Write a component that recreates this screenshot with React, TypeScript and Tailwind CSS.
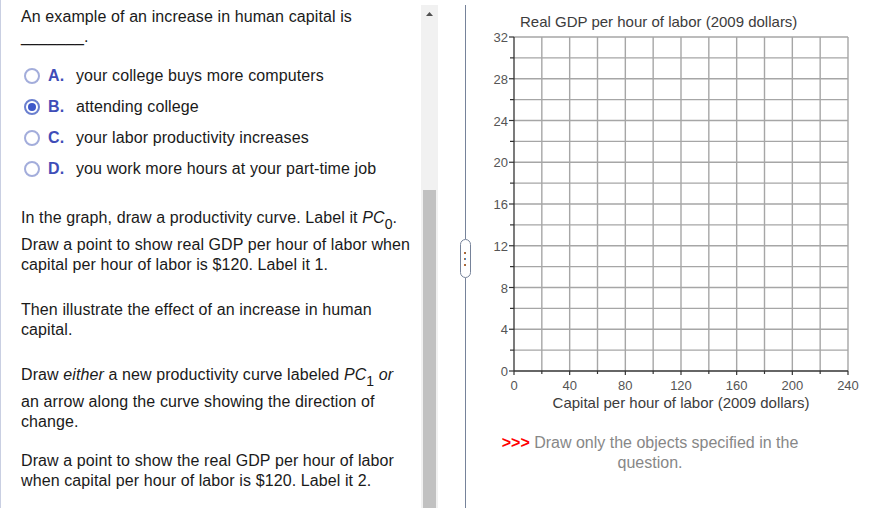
import React from "react";

const X0 = 22;
const X1 = 356;
const Y0 = 371;
const Y1 = 37;
const DX = (X1 - X0) / 12;
const DY = (Y0 - Y1) / 16;

const options = [
  { letter: "A.", text: "your college buys more computers", checked: false },
  { letter: "B.", text: "attending college", checked: true },
  { letter: "C.", text: "your labor productivity increases", checked: false },
  { letter: "D.", text: "you work more hours at your part-time job", checked: false },
];

const Radio = ({ checked }: { checked: boolean }) => (
  <span
    className={
      checked
        ? "ml-[3px] flex h-[16px] w-[16px] shrink-0 items-center justify-center rounded-full border-2 border-[#6a7fcf] bg-white"
        : "ml-[3px] flex h-[16px] w-[16px] shrink-0 items-center justify-center rounded-full border-2 border-[#a3addb] bg-white"
    }
  >
    {checked && <span className="h-[8px] w-[8px] rounded-full bg-[#3d57c9]" />}
  </span>
);

const Graph = () => {
  const vLines = Array.from({ length: 12 }, (_, i) => X0 + (i + 1) * DX);
  const hLines = Array.from({ length: 16 }, (_, j) => Y0 - (j + 1) * DY);
  const yTicks = Array.from({ length: 17 }, (_, j) => j);
  const xTicks = Array.from({ length: 13 }, (_, i) => i);

  return (
    <svg width="380" height="433" className="block" fontFamily="'Liberation Sans', Arial, sans-serif">
      <text x="28" y="27" fontSize="15" fill="#3c3c3c">
        Real GDP per hour of labor (2009 dollars)
      </text>

      {/* grid */}
      {vLines.map((x) => (
        <line key={"v" + x} x1={x} x2={x} y1={Y1} y2={Y0} stroke="#a6a6a6" strokeWidth="1.4" />
      ))}
      {hLines.map((y) => (
        <line key={"h" + y} x1={X0} x2={X1} y1={y} y2={y} stroke="#a6a6a6" strokeWidth="1.4" />
      ))}

      {/* axes */}
      <line x1={X0} x2={X0} y1={Y1} y2={Y0} stroke="#333" strokeWidth="1.3" />
      <line x1={X0} x2={X1} y1={Y0} y2={Y0} stroke="#333" strokeWidth="1.3" />

      {yTicks.map((j) => {
        const y = Y0 - j * DY;
        const major = j % 2 === 0;
        return (
          <g key={"yt" + j}>
            <line x1={X0 - (major ? 5 : 4)} x2={X0} y1={y} y2={y} stroke="#333" strokeWidth="1.2" />
            {major && (
              <text x="16" y={y + 5} fontSize="13" fill="#555" textAnchor="end">
                {j * 2}
              </text>
            )}
          </g>
        );
      })}

      {xTicks.map((i) => {
        const x = X0 + i * DX;
        const major = i % 2 === 0;
        return (
          <g key={"xt" + i}>
            <line x1={x} x2={x} y1={Y0} y2={Y0 + (major ? 4 : 3)} stroke="#333" strokeWidth="1.2" />
            {major && (
              <text x={x} y="390" fontSize="13" fill="#555" textAnchor="middle">
                {i * 20}
              </text>
            )}
          </g>
        );
      })}

      <text x={(X0 + X1) / 2} y="408" fontSize="15" fill="#3c3c3c" textAnchor="middle">
        Capital per hour of labor (2009 dollars)
      </text>
    </svg>
  );
};

const App = () => {
  return (
    <div className="flex h-[508px] w-[872px] overflow-hidden bg-white font-['Liberation_Sans',Arial,sans-serif]">
      {/* Question panel */}
      <div className="h-full w-[421px] shrink-0 border-l border-[#c9cfe2] pl-[20px] pr-[4px] text-[16px] leading-[20px] tracking-[0.1px] text-[#1a1a1a]">
        <p className="pt-[7px]">An example of an increase in human capital is</p>
        <p>_______.</p>

        <div className="mt-[19px] flex flex-col gap-[11px]">
          {options.map((o) => (
            <div key={o.letter} className="flex h-[20px] items-center">
              <Radio checked={o.checked} />
              <span className="ml-[8px] w-[28px] shrink-0 font-bold text-[#3f4db8]">{o.letter}</span>
              <span>{o.text}</span>
            </div>
          ))}
        </div>

        <p className="mt-[29px]">
          In the graph, draw a productivity curve. Label it <i>PC</i>
          <sub className="bottom-[-6px] text-[14px]">0</sub>.
        </p>
        <p className="mt-[7px]">
          Draw a point to show real GDP per hour of labor when capital per hour of labor is $120. Label it 1.
        </p>
        <p className="mt-[25px]">Then illustrate the effect of an increase in human capital.</p>
        <div className="mt-[25px]">
          Draw <i>either</i> a new productivity curve labeled <i>PC</i>
          <sub className="bottom-[-6px] text-[14px]">1</sub> <i>or</i>
        </div>
        <p className="mt-[7px]">an arrow along the curve showing the direction of change.</p>
        <p className="mt-[19px]">
          Draw a point to show the real GDP per hour of labor when capital per hour of labor is $120. Label it 2.
        </p>
      </div>

      {/* Scrollbar */}
      <div className="mt-[5px] flex w-[17px] shrink-0 flex-col bg-[#f1f1f1]">
        <div className="flex h-[185px] justify-center pt-[7px]">
          <svg width="7" height="4" viewBox="0 0 7 4">
            <polygon points="0,4 3.5,0 7,4" fill="#505050" />
          </svg>
        </div>
        <div className="mx-[2px] flex-1 bg-[#c1c1c1]" />
      </div>

      {/* Splitter */}
      <div className="flex w-[54px] shrink-0 flex-col items-center pt-[5px]">
        <div className="h-[234px] w-px bg-[#76839a]" />
        <div className="flex h-[39px] w-[11px] flex-col items-center justify-center gap-[4px] rounded-full border border-[#76839a] bg-white">
          <span className="flex h-[2px] w-[2px]">
            <span className="w-px bg-[#c2692a]" />
            <span className="w-px bg-[#8c6a52]" />
          </span>
          <span className="flex h-[2px] w-[2px]">
            <span className="w-px bg-[#b8733c]" />
            <span className="w-px bg-[#3d8ad6]" />
          </span>
          <span className="flex h-[2px] w-[2px]">
            <span className="w-px bg-[#c2692a]" />
            <span className="w-px bg-[#8c6a52]" />
          </span>
        </div>
        <div className="w-px flex-1 bg-[#76839a]" />
      </div>

      {/* Graph panel */}
      <div className="flex w-[380px] shrink-0 flex-col">
        <Graph />
        <div className="ml-[3px] w-[310px] text-center text-[16px] leading-[20px] text-[#878787]">
          <span className="font-bold text-[#ff0000]">&gt;&gt;&gt;</span> Draw only the objects specified in the
          question.
        </div>
      </div>
    </div>
  );
};

export default App;
